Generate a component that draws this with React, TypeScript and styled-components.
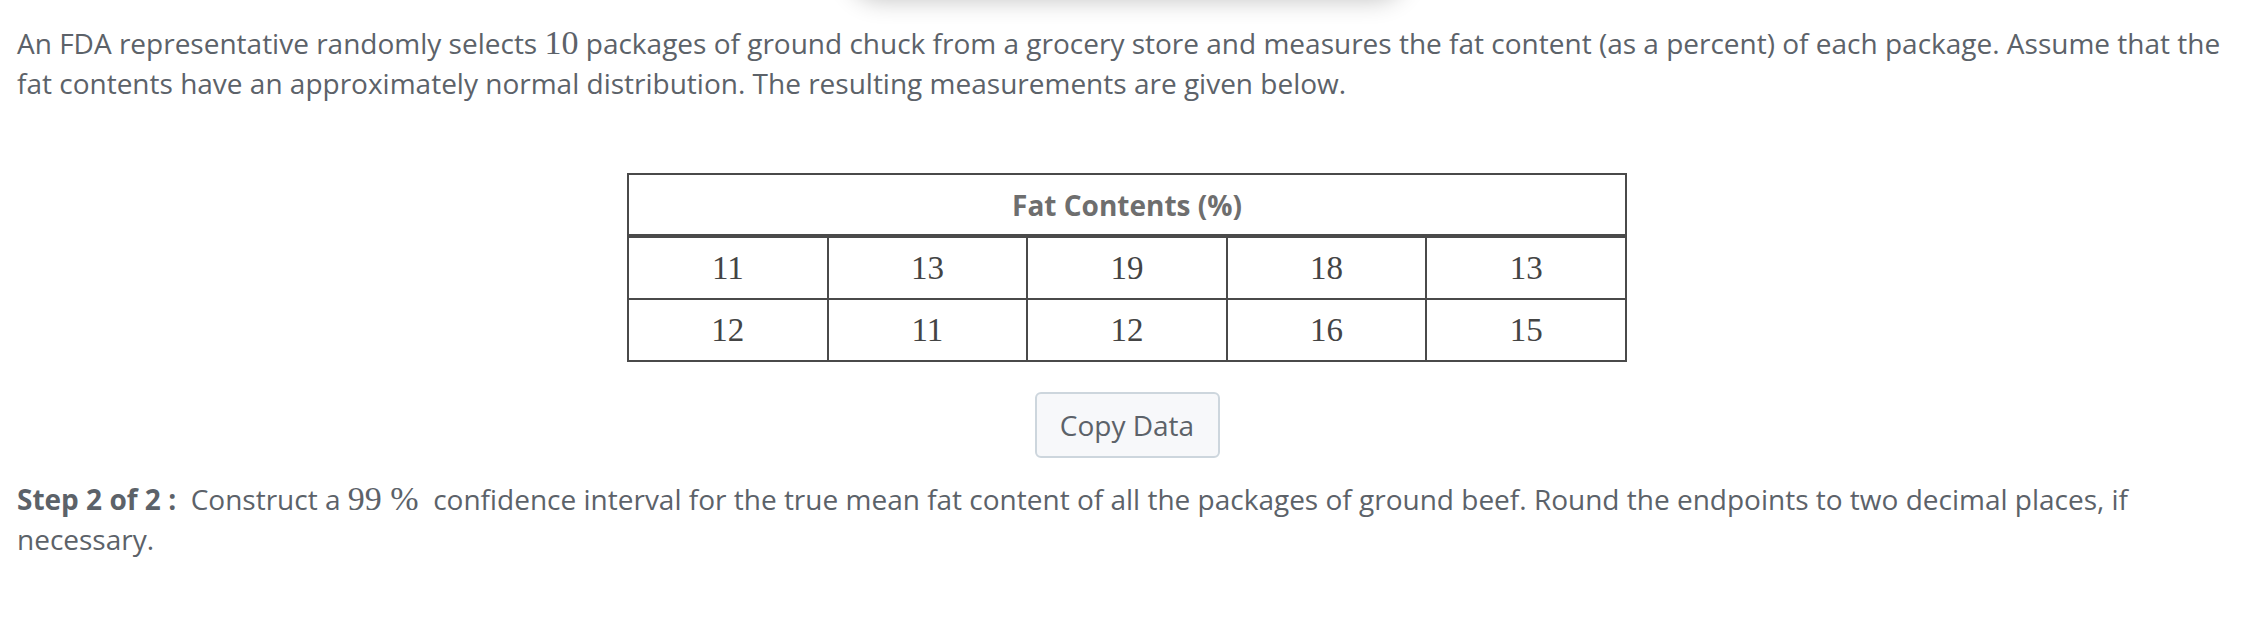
import React from "react";
import styled, { createGlobalStyle } from "styled-components";

const Global = createGlobalStyle`
  html, body { margin: 0; padding: 0; background: #ffffff; }
  body { font-family: "Open Sans", "Liberation Sans", sans-serif; overflow: hidden; }
`;

const Page = styled.div`
  position: relative;
  width: 2244px;
  height: 622px;
  box-sizing: border-box;
  padding: 23px 7px 0 17px;
  color: #5c6269;
  font-size: 28px;
  line-height: 40px;
`;

const TopShadow = styled.div`
  position: absolute;
  top: -60px;
  left: 850px;
  width: 555px;
  height: 58px;
  border-radius: 30px;
  background: #ffffff;
  box-shadow: 0 2px 24px rgba(0, 0, 0, 0.24);
`;

const Paragraph = styled.p`
  margin: 0;
`;

const MathNum = styled.span`
  font-family: "Liberation Serif", "Times New Roman", serif;
  font-size: 34px;
`;

const TableWrap = styled.div`
  display: flex;
  justify-content: center;
  margin-top: 70px;
`;

const DataTable = styled.table`
  border-collapse: collapse;
  width: 1000px;
  border: 2px solid #4a4a4a;
`;

const HeadCell = styled.th`
  height: 59px;
  padding: 0;
  border-bottom: 4px solid #4a4a4a;
  font-family: "Open Sans", "Liberation Sans", sans-serif;
  font-weight: 700;
  font-size: 28px;
  color: #6e6e6e;
  text-align: center;
`;

const Cell = styled.td`
  width: 200px;
  height: 60px;
  padding: 0;
  border: 2px solid #4a4a4a;
  text-align: center;
  font-family: "Liberation Serif", "Times New Roman", serif;
  font-size: 33px;
  color: #444444;
`;

const ButtonRow = styled.div`
  display: flex;
  justify-content: center;
  margin-top: 30px;
`;

const CopyButton = styled.button`
  width: 185px;
  height: 66px;
  border: 2px solid #cdd6dd;
  border-radius: 6px;
  background: #f7f8fa;
  color: #5c6269;
  font-family: "Open Sans", "Liberation Sans", sans-serif;
  font-size: 28px;
  cursor: pointer;
`;

const StepText = styled.p`
  margin: 21px 0 0 0;
`;

const Bold = styled.b`
  font-weight: 700;
`;

const rows = [
  [11, 13, 19, 18, 13],
  [12, 11, 12, 16, 15],
];

export default function App() {
  return (
    <>
      <Global />
      <Page>
        <TopShadow />
        <Paragraph>
          An FDA representative randomly selects <MathNum>10</MathNum> packages of ground chuck from a
          grocery store and measures the fat content (as a percent) of each package. Assume that the
          fat contents have an approximately normal distribution. The resulting measurements are given
          below.
        </Paragraph>
        <TableWrap>
          <DataTable>
            <thead>
              <tr>
                <HeadCell colSpan={5}>Fat Contents (%)</HeadCell>
              </tr>
            </thead>
            <tbody>
              {rows.map((r, i) => (
                <tr key={i}>
                  {r.map((v, j) => (
                    <Cell key={j}>{v}</Cell>
                  ))}
                </tr>
              ))}
            </tbody>
          </DataTable>
        </TableWrap>
        <ButtonRow>
          <CopyButton>Copy Data</CopyButton>
        </ButtonRow>
        <StepText>
          <Bold>Step 2 of 2 :</Bold>&nbsp; Construct a <MathNum>99 %</MathNum>&nbsp; confidence interval
          for the true mean fat content of all the packages of ground beef. Round the endpoints to two
          decimal places, if necessary.
        </StepText>
      </Page>
    </>
  );
}
